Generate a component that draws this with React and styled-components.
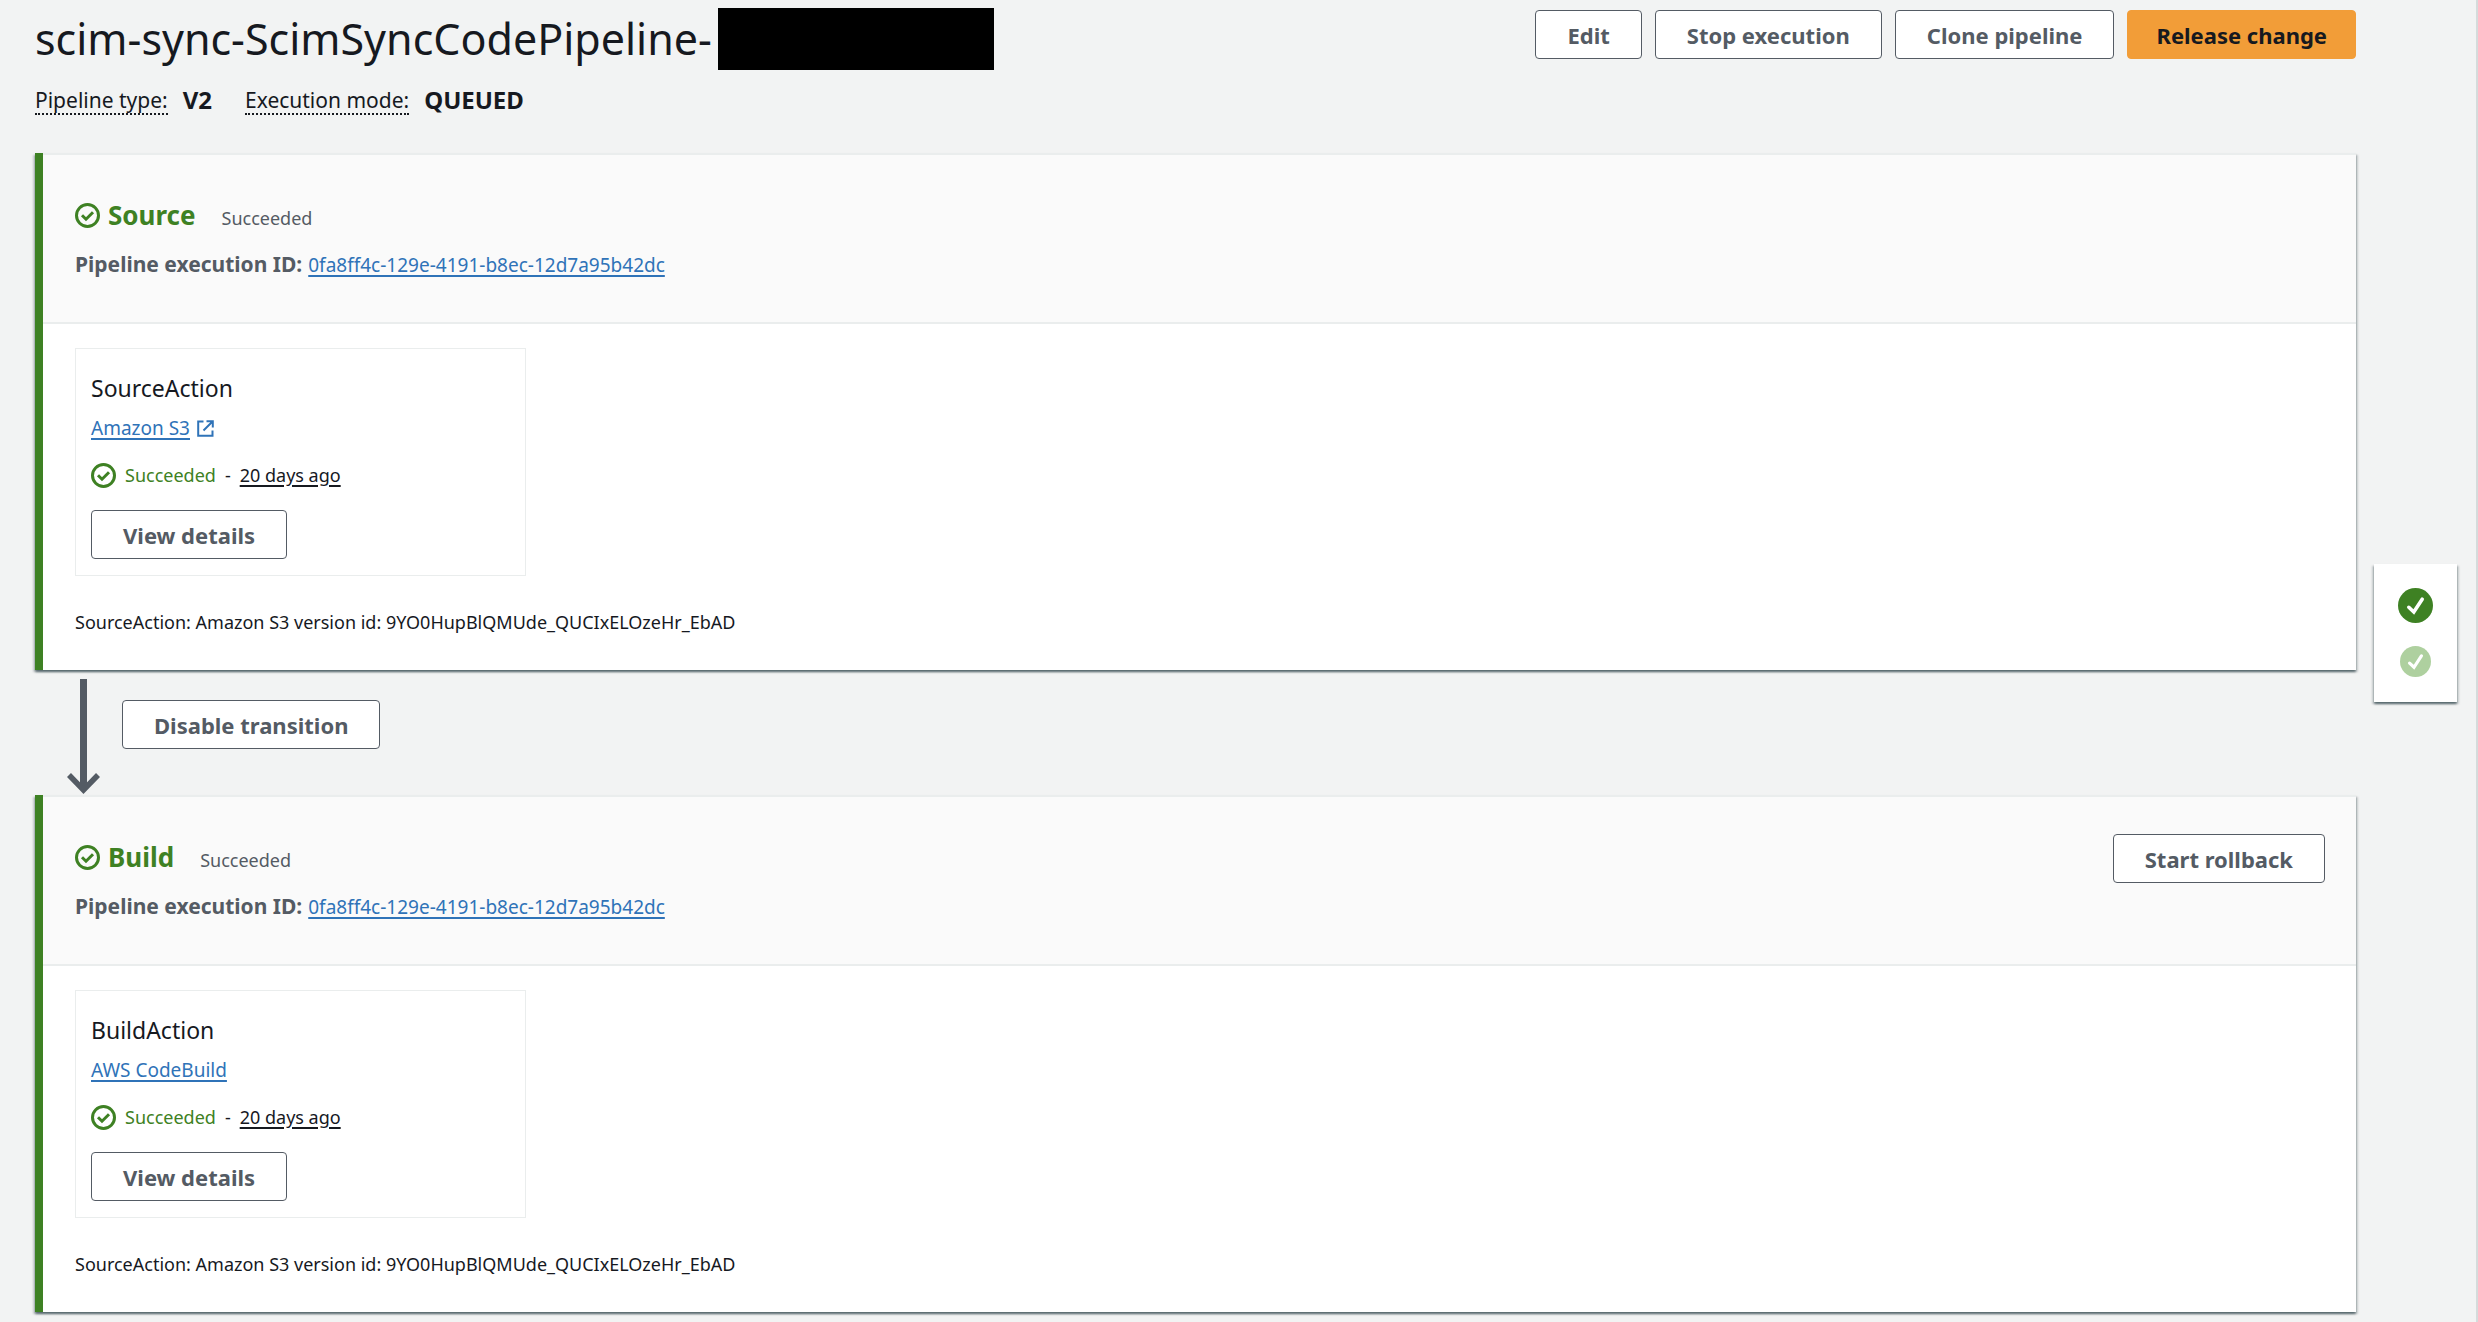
import styled, { createGlobalStyle } from 'styled-components'

const GlobalStyle = createGlobalStyle`
* { box-sizing: border-box; }
body {
  margin: 0;
  background: #f2f3f3;
  color: #16191f;
  font-family: "Noto Sans", "Open Sans", sans-serif;
  font-size: 18px;
  line-height: 24px;
}
h1, h2, h3, p { margin: 0; }
`

const shadow = '0 2px 2px rgba(0, 28, 36, 0.5), 2px 2px 2px rgba(0, 28, 36, 0.15), -2px 2px 2px rgba(0, 28, 36, 0.15)'

const Page = styled.div`
display: grid;
grid-template-columns: 1fr 83px;
column-gap: 18px;
align-items: start;
min-height: 100vh;
padding: 8px 19px 10px 35px;
border-right: 2px solid #d5dbdb;
`

const Header = styled.header`
display: flex;
justify-content: space-between;
align-items: flex-start;
`

const Title = styled.h1`
display: flex;
gap: 6px;
font-size: 43px;
font-weight: 400;
line-height: 62px;
`

const Redacted = styled.span`
width: 276px;
background: #000;
`

const Actions = styled.div`
display: flex;
gap: 13px;
padding-top: 2px;
`

const Button = styled.button`
height: 49px;
padding: 0 ${({ $primary }) => ($primary ? 28 : 31)}px;
border: 1px solid ${({ $primary }) => ($primary ? '#f29d38' : '#545b64')};
border-radius: 4px;
background: ${({ $primary }) => ($primary ? '#f29d38' : '#fff')};
color: ${({ $primary }) => ($primary ? '#16191f' : '#545b64')};
font-family: inherit;
font-size: 22px;
font-weight: 700;
line-height: 30px;
white-space: nowrap;
cursor: pointer;
`

const Meta = styled.div`
display: flex;
gap: 33px;
padding: 18px 0 38px;
line-height: 24px;
`

const MetaItem = styled.div`
display: flex;
align-items: flex-start;
gap: 15px;
`

const MetaLabel = styled.span`
padding-bottom: 1px;
border-bottom: 2px dotted #16191f;
font-size: 21px;
`

const MetaValue = styled.strong`
font-size: 24px;
`

const StageCard = styled.section`
border-left: 8px solid #3e8123;
background: #fff;
box-shadow: ${shadow};
`

const StageHeader = styled.div`
display: flex;
justify-content: space-between;
align-items: flex-start;
padding: 37px 31px 37px 32px;
border-top: 2px solid #eaeded;
border-bottom: 2px solid #eaeded;
background: #fafafa;
color: #545b64;
`

const StageInfo = styled.div`
display: grid;
gap: 13px;
padding: 5px 0;
`

const StageTitle = styled.div`
display: flex;
align-items: baseline;
gap: 26px;
line-height: 36px;
`

const StageName = styled.h2`
color: #3e8123;
font-size: 26px;
font-weight: 700;
svg {
  margin-right: 8px;
  vertical-align: -3px;
}
`

const Execution = styled.div`
display: flex;
align-items: baseline;
gap: 6px;
font-size: 21px;
line-height: 30px;
`

const Link = styled.a`
color: #2f73b8;
font-size: 19px;
text-decoration: underline;
text-decoration-thickness: 2px;
text-underline-offset: 3px;
text-decoration-skip-ink: none;
`

const StageBody = styled.div`
padding: 24px 32px 36px;
`

const ActionCard = styled.article`
width: 451px;
padding: 23px 15px 16px;
border: 1px solid #eaeded;
`

const ActionName = styled.h3`
font-size: 23px;
font-weight: 400;
line-height: 32px;
`

const Provider = styled.div`
display: flex;
align-items: center;
gap: 7px;
margin: 12px 0 22px;
`

const Status = styled.div`
display: flex;
align-items: center;
gap: 9px;
margin-bottom: 22px;
line-height: 26px;
`

const StatusText = styled.span`
color: #3e8123;
`

const Ago = styled.span`
text-decoration: underline;
text-decoration-thickness: 2px;
text-underline-offset: 3px;
`

const Note = styled.p`
padding-top: 34px;
`

const Transition = styled.div`
display: flex;
align-items: flex-start;
gap: 22px;
padding: 9px 32px 0;
`

const TransitionAction = styled.div`
padding-top: 21px;
`

const ArrowIcon = styled.svg`
display: block;
width: 33px;
height: 116px;
`

const Icon = styled.svg`
flex: none;
width: ${({ $size }) => $size}px;
height: ${({ $size }) => $size}px;
`

const Overview = styled.nav`
display: flex;
flex-direction: column;
align-items: center;
gap: 23px;
margin-top: 556px;
padding: 24px 0 25px;
background: #fff;
box-shadow: ${shadow};
`

const OverviewLink = styled.a`
display: flex;
`

const executionId = '0fa8ff4c-129e-4191-b8ec-12d7a95b42dc'
const revision = 'SourceAction: Amazon S3 version id: 9YO0HupBlQMUde_QUCIxELOzeHr_EbAD'

const stages = [
  { name: 'Source', action: 'SourceAction', provider: 'Amazon S3', external: true },
  { name: 'Build', action: 'BuildAction', provider: 'AWS CodeBuild', rollback: true },
]

function CheckIcon() {
  return (
    <Icon $size={25} viewBox="0 0 25 25" fill="none" stroke="#3e8123" strokeWidth="3" aria-hidden="true">
      <circle cx="12.5" cy="12.5" r="11" />
      <path d="M7 12.2l4 4 7-7" />
    </Icon>
  )
}

function ExternalIcon() {
  return (
    <Icon $size={17} viewBox="0 0 17 17" fill="none" stroke="#2f73b8" strokeWidth="2" aria-hidden="true">
      <path d="M6.5 1.5H1.2v14.3h14.3v-5.3M9.5 1.2h6.3v6.3M15.5 1.5l-9 9" />
    </Icon>
  )
}

function DotIcon({ size, color }) {
  return (
    <Icon $size={size} viewBox="0 0 35 35" fill="none" aria-hidden="true">
      <circle cx="17.5" cy="17.5" r="17.5" fill={color} />
      <path d="M10.8 19.3l5 4.7 8.4-12.8" stroke="#fff" strokeWidth="3.6" strokeLinecap="round" />
    </Icon>
  )
}

function Stage({ stage }) {
  return (
    <StageCard id={stage.name}>
      <StageHeader>
        <StageInfo>
          <StageTitle>
            <StageName><CheckIcon />{stage.name}</StageName>
            <span>Succeeded</span>
          </StageTitle>
          <Execution>
            <strong>Pipeline execution ID:</strong>
            <Link href="#execution">{executionId}</Link>
          </Execution>
        </StageInfo>
        {stage.rollback && <Button type="button">Start rollback</Button>}
      </StageHeader>
      <StageBody>
        <ActionCard>
          <ActionName>{stage.action}</ActionName>
          <Provider>
            <Link href="#provider">{stage.provider}</Link>
            {stage.external && <ExternalIcon />}
          </Provider>
          <Status>
            <CheckIcon />
            <StatusText>Succeeded</StatusText>
            <span>-</span>
            <Ago>20 days ago</Ago>
          </Status>
          <Button type="button">View details</Button>
        </ActionCard>
        <Note>{revision}</Note>
      </StageBody>
    </StageCard>
  )
}

function App() {
  return (
    <>
      <GlobalStyle />
      <Page>
        <main>
          <Header>
            <Title>scim-sync-ScimSyncCodePipeline-<Redacted /></Title>
            <Actions>
              <Button type="button">Edit</Button>
              <Button type="button">Stop execution</Button>
              <Button type="button">Clone pipeline</Button>
              <Button type="button" $primary>Release change</Button>
            </Actions>
          </Header>
          <Meta>
            <MetaItem>
              <MetaLabel>Pipeline type:</MetaLabel>
              <MetaValue>V2</MetaValue>
            </MetaItem>
            <MetaItem>
              <MetaLabel>Execution mode:</MetaLabel>
              <MetaValue>QUEUED</MetaValue>
            </MetaItem>
          </Meta>
          <Stage stage={stages[0]} />
          <Transition>
            <ArrowIcon viewBox="0 0 33 116" fill="none" stroke="#545b64" aria-hidden="true">
              <path d="M16.5 0v110" strokeWidth="7" />
              <path d="M2 96l14.5 15L31 96" strokeWidth="5.5" />
            </ArrowIcon>
            <TransitionAction>
              <Button type="button">Disable transition</Button>
            </TransitionAction>
          </Transition>
          <Stage stage={stages[1]} />
        </main>
        <Overview aria-label="Stages">
          <OverviewLink href="#Source" aria-label="Source"><DotIcon size={35} color="#3e8123" /></OverviewLink>
          <OverviewLink href="#Build" aria-label="Build"><DotIcon size={31} color="#aed09f" /></OverviewLink>
        </Overview>
      </Page>
    </>
  )
}

export default App
